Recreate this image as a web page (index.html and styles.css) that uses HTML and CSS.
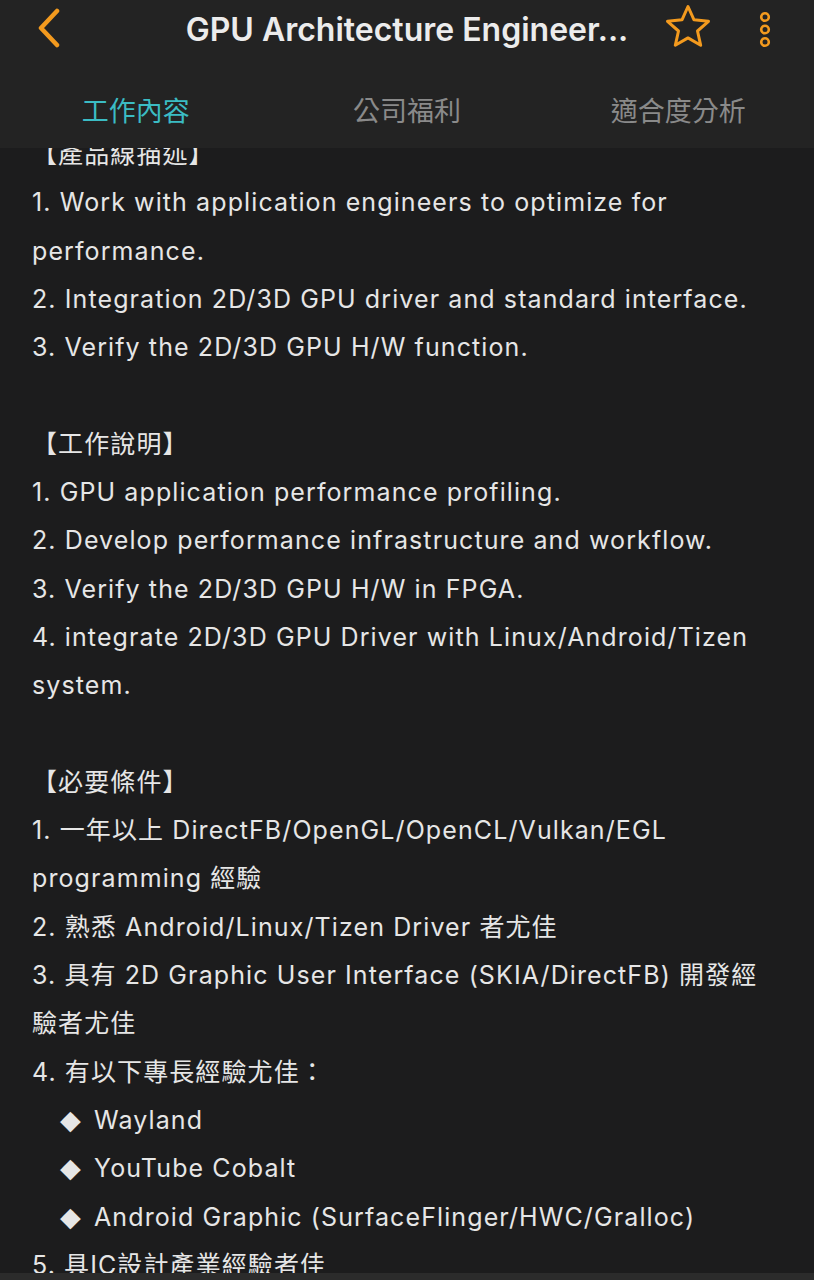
FILE: index.html
```html
<!DOCTYPE html>
<html lang="zh-Hant">
<head>
<meta charset="utf-8">
<link rel="stylesheet" href="styles.css">
</head>
<body>
<div class="screen">
  <header class="header">
    <div class="topbar">
      <button class="icon-btn back" aria-label="back">
        <svg width="26" height="40" viewBox="0 0 26 40"><path d="M21 3 L5 20 L21 37" fill="none" stroke="#f39a1e" stroke-width="4.5" stroke-linecap="round" stroke-linejoin="round"/></svg>
      </button>
      <h1 class="title">GPU Architecture Engineer...</h1>
      <div class="actions">
        <button class="icon-btn star" aria-label="favorite">
          <svg width="50" height="48" viewBox="0 0 50 48"><path d="M25 3.5 L31 16.8 L45.5 18.3 L34.5 28 L37.7 42.3 L25 34.9 L12.3 42.3 L15.5 28 L4.5 18.3 L19 16.8 Z" fill="none" stroke="#f39a1e" stroke-width="3" stroke-linejoin="round"/></svg>
        </button>
        <button class="icon-btn more" aria-label="more">
          <svg width="14" height="40" viewBox="0 0 14 40"><circle cx="7" cy="8" r="3.8" fill="none" stroke="#f39a1e" stroke-width="2.6"/><circle cx="7" cy="20.5" r="3.8" fill="none" stroke="#f39a1e" stroke-width="2.6"/><circle cx="7" cy="33" r="3.8" fill="none" stroke="#f39a1e" stroke-width="2.6"/></svg>
        </button>
      </div>
    </div>
    <nav class="tabs">
      <div class="tab active">工作內容</div>
      <div class="tab">公司福利</div>
      <div class="tab">適合度分析</div>
    </nav>
  </header>
  <main class="content">
    <div class="scroll">
      <p class="line">【產品線描述】</p>
      <p class="line">1. Work with application engineers to optimize for performance.</p>
      <p class="line">2. Integration 2D/3D GPU driver and standard interface.</p>
      <p class="line">3. Verify the 2D/3D GPU H/W function.</p>
      <p class="line blank">&nbsp;</p>
      <p class="line">【工作說明】</p>
      <p class="line">1. GPU application performance profiling.</p>
      <p class="line">2. Develop performance infrastructure and workflow.</p>
      <p class="line">3. Verify the 2D/3D GPU H/W in FPGA.</p>
      <p class="line">4. integrate 2D/3D GPU Driver with Linux/Android/Tizen system.</p>
      <p class="line blank">&nbsp;</p>
      <p class="line">【必要條件】</p>
      <p class="line">1. 一年以上 DirectFB/OpenGL/OpenCL/Vulkan/EGL programming 經驗</p>
      <p class="line">2. 熟悉 Android/Linux/Tizen Driver 者尤佳</p>
      <p class="line">3. 具有 2D Graphic User Interface (SKIA/DirectFB) 開發經驗者尤佳</p>
      <p class="line">4. 有以下專長經驗尤佳：</p>
      <p class="line sub"><span class="dia">◆</span> Wayland</p>
      <p class="line sub"><span class="dia">◆</span> YouTube Cobalt</p>
      <p class="line sub"><span class="dia">◆</span> Android Graphic (SurfaceFlinger/HWC/Gralloc)</p>
      <p class="line">5. 具IC設計產業經驗者佳</p>
      <p class="line">6. 熟悉 Linux 環境開發</p>
    </div>
  </main>
  <div class="bottombar"></div>
</div>
</body>
</html>
```
FILE: styles.css
```css
* { box-sizing: border-box; }
html, body { margin: 0; padding: 0; background: #1c1c1d; }
.screen {
  width: 814px;
  height: 1280px;
  display: flex;
  flex-direction: column;
  overflow: hidden;
  background: #1c1c1d;
  font-family: Inter, "Noto Sans CJK TC", sans-serif;
}
.header {
  background: #232323;
  height: 148px;
  flex: none;
  display: flex;
  flex-direction: column;
}
.topbar {
  height: 58px;
  position: relative;
  display: flex;
  align-items: center;
  justify-content: center;
}
.icon-btn {
  background: none;
  border: 0;
  padding: 0;
  display: flex;
  align-items: center;
  justify-content: center;
}
.back {
  position: absolute;
  left: 36px;
  top: 8px;
}
.title {
  margin: 0;
  color: #ececec;
  font-size: 32px;
  font-weight: 600;
  letter-spacing: 0;
}
.actions {
  position: absolute;
  right: 42px;
  top: 3px;
  display: flex;
  align-items: center;
  gap: 45px;
}
.more { margin-top: 4px; }
.tabs {
  flex: 1;
  display: grid;
  grid-template-columns: repeat(3, 1fr);
  align-items: center;
  padding-top: 12px;
}
.tab {
  text-align: center;
  font-size: 27px;
  color: #8a8a8a;
  font-family: "Noto Sans CJK TC", sans-serif;
  font-weight: 400;
}
.tab.active { color: #3bbcc4; }
.content {
  flex: 1;
  overflow: hidden;
  padding: 0 46px 0 32px;
}
.scroll { margin-top: -18px; }
.line {
  margin: 0;
  font-size: 25px;
  letter-spacing: 1.1px;
  line-height: 48.3px;
  color: #e6e6e6;
}
.sub { padding-left: 28px; }
.dia { font-family: "DejaVu Sans", sans-serif; font-size: 27px; margin-right: 4px; }
.bottombar {
  flex: none;
  height: 7px;
  background: #2b2b2b;
}
```
